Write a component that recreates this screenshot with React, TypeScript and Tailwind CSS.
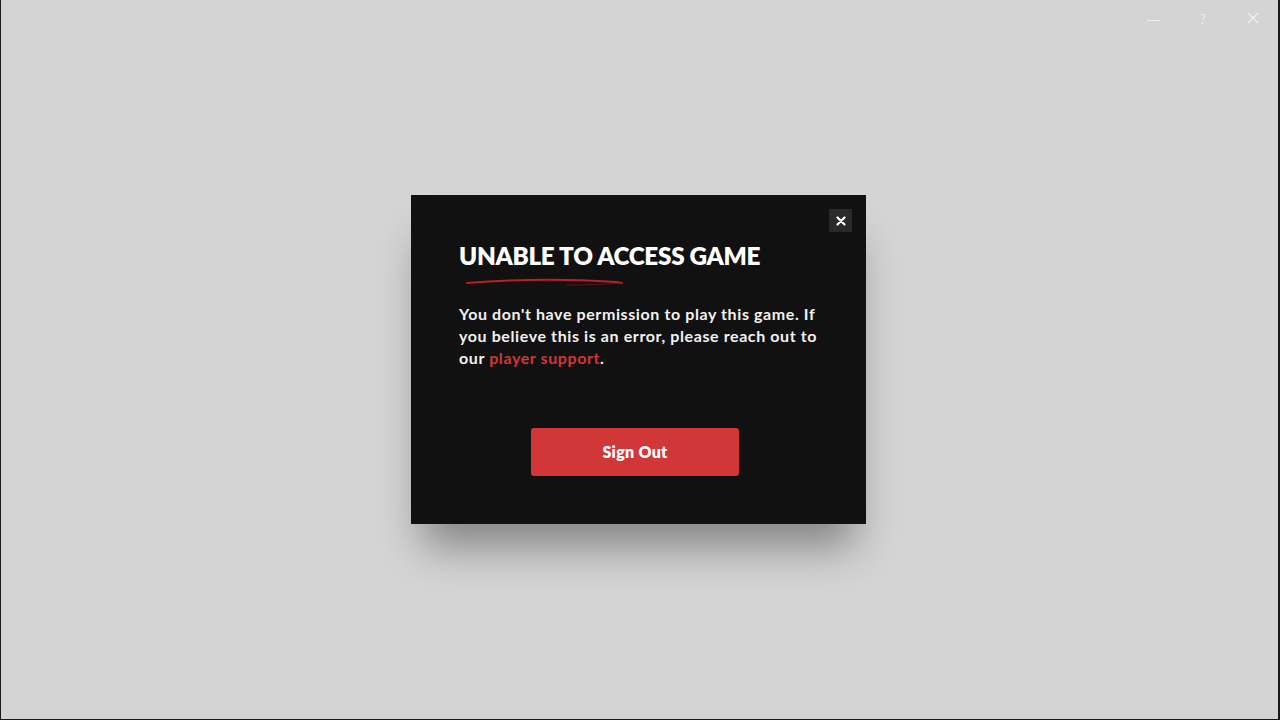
import React from "react";

export default function App() {
  const font = { fontFamily: "Lato, 'Open Sans', 'Liberation Sans', sans-serif" };
  return (
    <div
      className="w-[1280px] h-[720px] bg-[#d4d4d4] border-l border-b border-r-2 border-[#1a1a1a] relative flex items-start justify-center overflow-hidden"
      style={font}
    >
      <div className="absolute top-0 right-0 flex items-center text-[#ececec]">
        <div className="w-[50px] h-[36px] flex items-center justify-center">
          <div className="w-[13px] h-px bg-[#f0f0f0] mt-[5px]" />
        </div>
        <div className="w-[50px] h-[36px] flex items-center justify-center text-[14px]">?</div>
        <div className="w-[50px] h-[36px] flex items-center justify-center">
          <svg width="12" height="12" viewBox="0 0 12 12" stroke="#f0f0f0" strokeWidth="1.2">
            <path d="M1 1L11 11M11 1L1 11" />
          </svg>
        </div>
      </div>

      <div className="mt-[195px] ml-[-2px] w-[455px] h-[329px] bg-[#111111] relative shadow-[0_34px_40px_-12px_rgba(0,0,0,0.38)] pl-[48px] pt-[46px] flex flex-col">
        <button className="absolute top-[14px] right-[14px] w-[23px] h-[23px] bg-[#2a2a2a] flex items-center justify-center">
          <svg width="10" height="10" viewBox="0 0 10 10" stroke="#ffffff" strokeWidth="2.2" strokeLinecap="round">
            <path d="M1.5 1.5L8.5 8.5M8.5 1.5L1.5 8.5" />
          </svg>
        </button>
        <h1 className="text-white font-extrabold text-[24.3px] leading-[30px] tracking-[-0.3px]">
          UNABLE TO ACCESS GAME
        </h1>
        <svg width="170" height="10" viewBox="0 0 170 10" className="ml-[7px] mt-[6px]">
          <path d="M1 6 C 40 3, 90 1, 150 5 L 156 6" stroke="#b8202a" strokeWidth="2" fill="none" strokeLinecap="round" />
          <path d="M100 8 C 120 8, 140 7, 156 6" stroke="#7a1820" strokeWidth="1" fill="none" opacity="0.7" />
        </svg>
        <p className="mt-[16px] w-[366px] text-[#f2f2f2] font-bold text-[16px] leading-[22px] tracking-[0.6px]">
          You don't have permission to play this game. If you believe this is an error, please reach out to our{" "}
          <span className="text-[#d13639]">player support</span>.
        </p>
        <button className="mt-[59px] ml-[72px] w-[208px] h-[48px] bg-[#d13639] rounded-[3px] text-white font-extrabold text-[16px] tracking-[0.3px]">
          Sign Out
        </button>
      </div>
    </div>
  );
}
